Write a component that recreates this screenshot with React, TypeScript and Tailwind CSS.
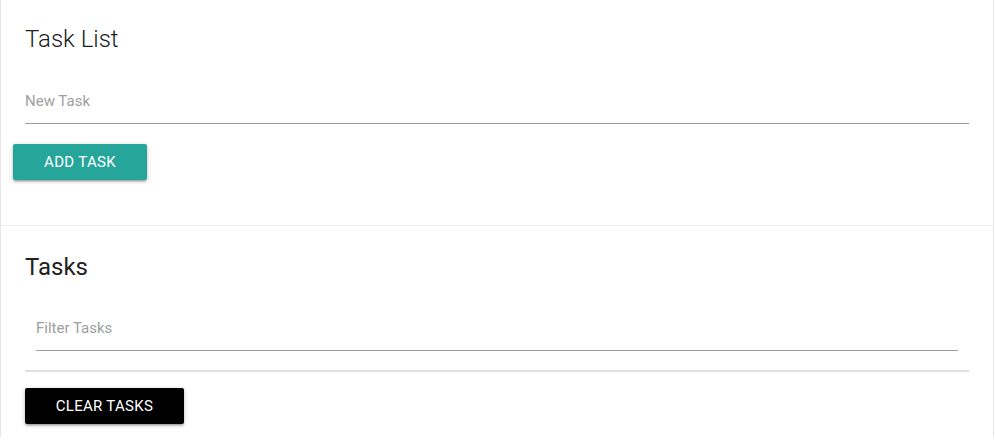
export default function App() {
  return (
    <div className="min-h-[443px] bg-white font-['Roboto',sans-serif]">
      <div className="w-[994px] border-x border-[#e6e6e6] bg-white">
        <div className="px-6 pt-[23px] pb-[45px]">
          <h1 className="text-[24px] leading-[32px] font-light text-[#212121]">Task List</h1>
          <div className="mt-[23px]">
            <input
              type="text"
              placeholder="New Task"
              className="block h-[46px] w-full border-b border-[#9e9e9e] bg-transparent text-[15px] text-[#212121] outline-none placeholder:text-[#9e9e9e]"
            />
          </div>
          <button className="-ml-[12px] mt-[20px] h-9 w-[134px] rounded-[2px] bg-[#26a69a] text-[15px] font-normal uppercase tracking-[0.3px] text-white shadow-[0_2px_2px_0_rgba(0,0,0,0.14),0_3px_1px_-2px_rgba(0,0,0,0.12),0_1px_5px_0_rgba(0,0,0,0.2)]">
            Add Task
          </button>
        </div>
        <div className="border-t border-[#ececec] px-6 pt-[25px] pb-[13px]">
          <h2 className="text-[24px] leading-[32px] font-normal text-[#212121]">Tasks</h2>
          <div className="mx-[11px] mt-[22px]">
            <input
              type="text"
              placeholder="Filter Tasks"
              className="block h-[46px] w-full border-b border-[#9e9e9e] bg-transparent text-[15px] text-[#212121] outline-none placeholder:text-[#9e9e9e]"
            />
          </div>
          <div className="mt-[19px] h-[2px] bg-[#e0e0e0]" />
          <button className="mt-[16px] h-9 w-[159px] rounded-[2px] bg-black text-[15px] font-normal uppercase tracking-[0.3px] text-white shadow-[0_2px_2px_0_rgba(0,0,0,0.14),0_3px_1px_-2px_rgba(0,0,0,0.12),0_1px_5px_0_rgba(0,0,0,0.2)]">
            Clear Tasks
          </button>
        </div>
      </div>
    </div>
  );
}
